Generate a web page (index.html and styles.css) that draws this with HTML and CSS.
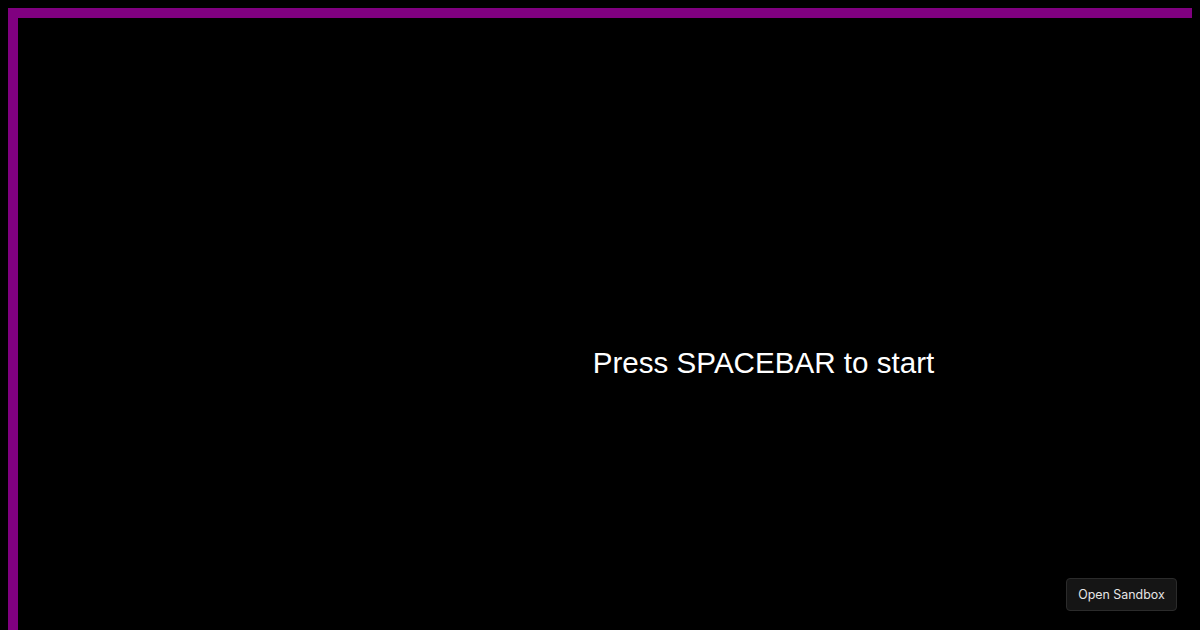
FILE: index.html
```html
<!DOCTYPE html>
<html>
<head>
<meta charset="utf-8">
<link rel="stylesheet" href="styles.css">
</head>
<body>
<div class="stage">
  <div class="message">Press SPACEBAR to start</div>
</div>
<button class="open-sandbox">Open Sandbox</button>
</body>
</html>
```

FILE: styles.css
```css
html, body {
  background: #000;
}
html {
  overflow: hidden;
}
body {
  margin: 8px;
  overflow: hidden;
}
.stage {
  width: 1491px;
  height: 690px;
  border: 10px solid #800080;
  background: #000;
  display: flex;
  align-items: center;
  justify-content: center;
}
.message {
  font-family: "Liberation Sans", Arial, sans-serif;
  font-size: 29.6px;
  color: #fff;
  line-height: 1;
}
.open-sandbox {
  position: fixed;
  right: 23px;
  bottom: 19px;
  width: 111px;
  height: 33px;
  padding: 0;
  background: #151515;
  border: 1px solid #2b2b2b;
  border-radius: 4px;
  color: #e6e6e6;
  font-family: Inter, "Liberation Sans", sans-serif;
  font-size: 12.4px;
}
```
